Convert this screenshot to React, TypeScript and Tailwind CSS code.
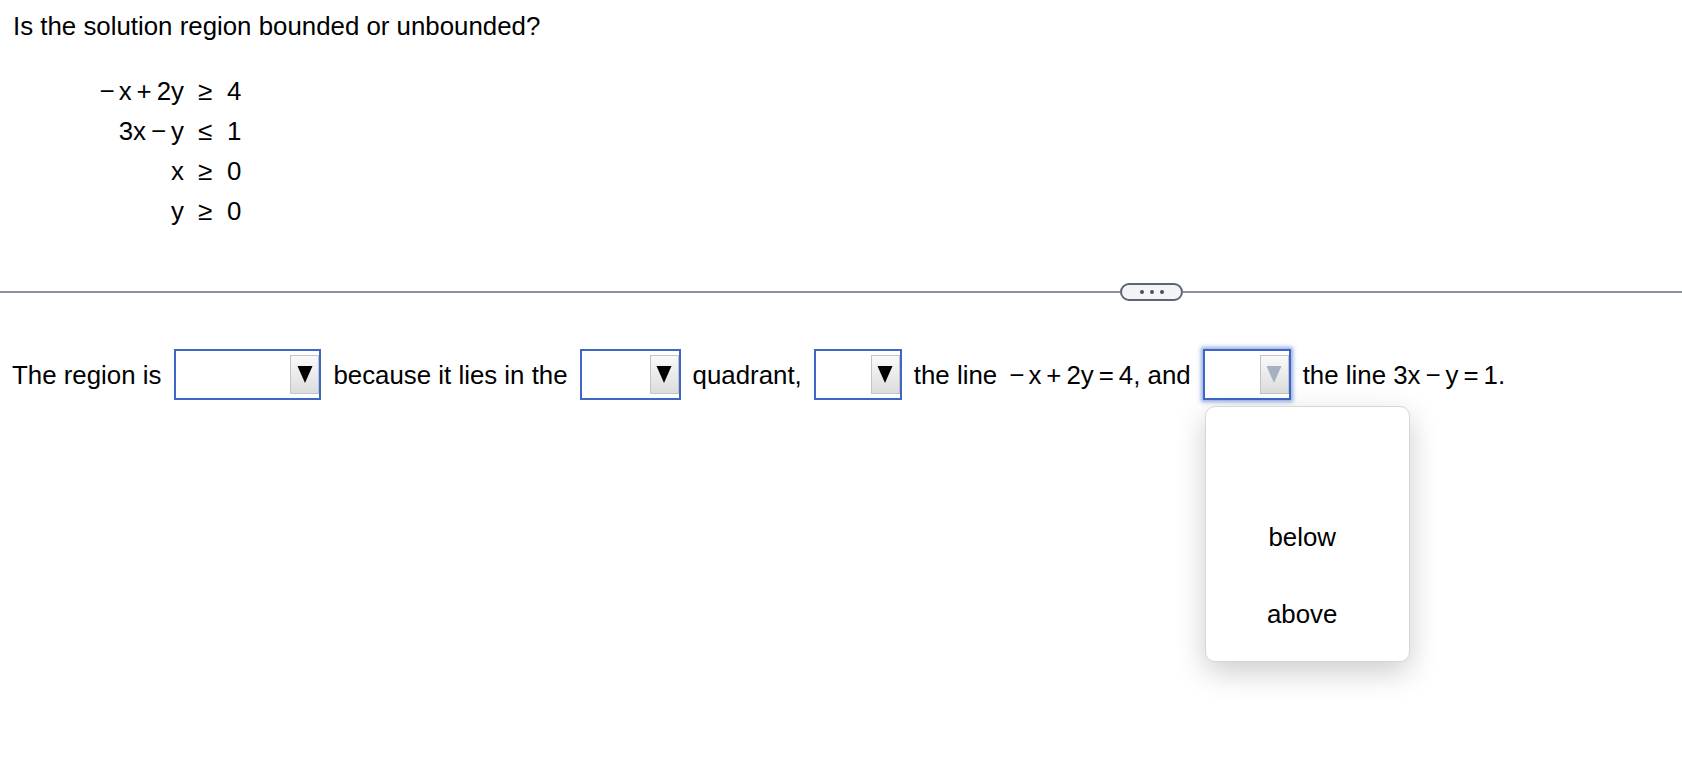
import React from "react";

function Arrow({ muted }: { muted?: boolean }) {
  return (
    <div className="flex h-[39px] w-[29px] items-center justify-center border border-[#c4c4c4] bg-gradient-to-b from-[#fafafa] to-[#dcdcdc]">
      <svg width="16" height="19" viewBox="0 0 16 19">
        <polygon points="0.5,1 15.5,1 8,18" fill={muted ? "#a7b0c2" : "#000"} />
      </svg>
    </div>
  );
}

function Select({ width, focused, children }: { width: string; focused?: boolean; children?: React.ReactNode }) {
  return (
    <div
      className={
        "relative flex h-[51px] shrink-0 items-center justify-end border-2 border-[#3d66c6] bg-white " +
        width +
        (focused ? " shadow-[0_0_4px_2px_rgba(61,102,198,0.55)]" : "")
      }
    >
      <Arrow muted={focused} />
      {children}
    </div>
  );
}

export default function App() {
  return (
    <div className="relative h-[774px] w-[1682px] overflow-hidden bg-white font-['Liberation_Sans',Arial,sans-serif] text-[25.85px] leading-[30px] text-black">
      <p className="pl-[13px] pt-[11px]">Is the solution region bounded or unbounded?</p>

      <div className="mt-[30px] grid grid-cols-[184px_43px_auto] leading-[40px]">
        <div className="text-right">
          <span>−</span>
          <span className="ml-[4px]">x</span>
          <span className="mx-[5px]">+</span>
          <span>2y</span>
        </div>
        <div className="pl-[14px]">≥</div>
        <div>4</div>

        <div className="text-right">
          <span>3x</span>
          <span className="mx-[5px]">−</span>
          <span>y</span>
        </div>
        <div className="pl-[14px]">≤</div>
        <div>1</div>

        <div className="text-right">x</div>
        <div className="pl-[14px]">≥</div>
        <div>0</div>

        <div className="text-right">y</div>
        <div className="pl-[14px]">≥</div>
        <div>0</div>
      </div>

      <div className="mt-[52px] flex h-[18px] items-center">
        <div className="h-[2px] w-[1120px] bg-[#8a92a0]" />
        <div className="flex h-[18px] w-[63px] shrink-0 items-center justify-center gap-[6px] rounded-full border-2 border-[#5b6674] bg-[#f3f4f6]">
          <span className="h-[4px] w-[4px] rounded-full bg-[#4a5260]" />
          <span className="h-[4px] w-[4px] rounded-full bg-[#4a5260]" />
          <span className="h-[4px] w-[4px] rounded-full bg-[#4a5260]" />
        </div>
        <div className="h-[2px] flex-1 bg-[#8a92a0]" />
      </div>

      <div className="mt-[48px] flex items-center gap-[12px] pl-[12px] whitespace-nowrap">
        <span className="mr-[1px]">The region is</span>
        <Select width="w-[147px]" />
        <span>because it lies in the</span>
        <Select width="w-[101px]" />
        <span>quadrant,</span>
        <Select width="w-[88px]" />
        <span>
          the line <span className="ml-[5px]">−</span>
          <span className="ml-[4px]">x</span>
          <span className="mx-[5px]">+</span>
          <span>2y</span>
          <span className="mx-[5px]">=</span>
          <span>4, and</span>
        </span>
        <Select width="w-[88px]" focused>
          <div className="absolute left-[0px] top-[55px] z-10 h-[256px] w-[205px] rounded-[10px] border border-[#d6d6d6] bg-white pt-[14px] pr-[10px] shadow-[0_10px_30px_rgba(0,0,0,0.2)]">
            <div className="h-[77px]" />
            <div className="flex h-[77px] items-center justify-center">below</div>
            <div className="flex h-[77px] items-center justify-center">above</div>
          </div>
        </Select>
        <span>
          the line 3x<span className="mx-[5px]">−</span>y<span className="mx-[5px]">=</span>1.
        </span>
      </div>
    </div>
  );
}
